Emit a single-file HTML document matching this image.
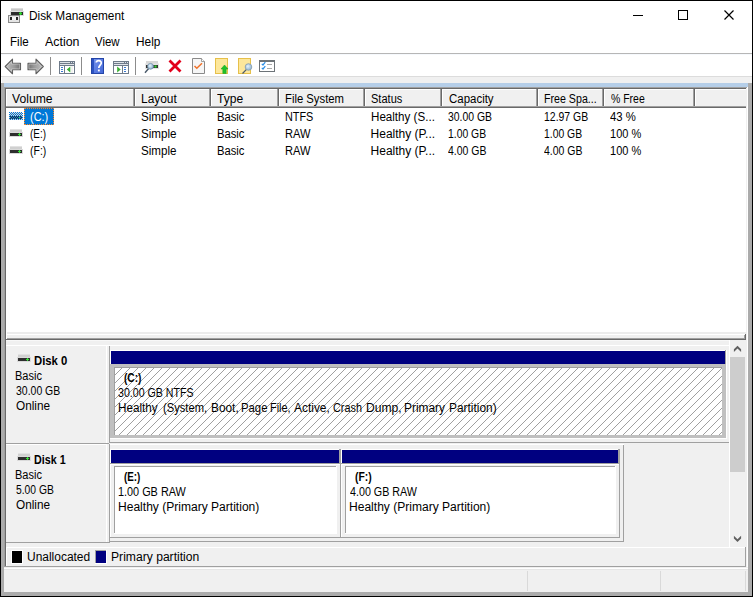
<!DOCTYPE html>
<html><head><meta charset="utf-8">
<style>
*{margin:0;padding:0;box-sizing:border-box}
html,body{width:753px;height:597px;overflow:hidden;background:#fff}
body{position:relative;font-family:"Liberation Sans",sans-serif;font-size:12px;line-height:15px;color:#000}
.a{position:absolute}
.t{position:absolute;white-space:nowrap;font-size:12px;line-height:15px}
.b{font-weight:bold}
svg{position:absolute;overflow:visible}
</style></head><body>
<div class="a" style="left:0px;top:0px;width:753px;height:1px;background:#000;"></div>
<div class="a" style="left:0px;top:596px;width:753px;height:1px;background:#000;"></div>
<div class="a" style="left:0px;top:0px;width:1px;height:597px;background:#000;"></div>
<div class="a" style="left:752px;top:0px;width:1px;height:597px;background:#000;"></div>
<svg style="left:8px;top:7px" width="16" height="16" viewBox="0 0 16 16" shape-rendering="crispEdges">
  <rect x="3" y="1" width="12" height="1" fill="#dcdcdc"/>
  <rect x="3" y="2" width="12" height="2" fill="#c8c8c8"/>
  <rect x="2" y="4" width="14" height="5" fill="#dedede"/>
  <rect x="3" y="5" width="12" height="3" fill="#2c2c2c"/>
  <rect x="11" y="5" width="3" height="3" fill="#1f6f1f"/>
  <rect x="12" y="5" width="1" height="3" fill="#30d030"/><rect x="11" y="6" width="3" height="1" fill="#30d030"/>
  <rect x="0" y="8" width="12" height="8" fill="#8a8a8a"/>
  <rect x="1" y="9" width="10" height="6" fill="#e4e4e4"/>
  <rect x="4" y="10" width="4" height="3" fill="#f4f4f4"/>
  <rect x="2" y="10" width="2" height="3" fill="#262626"/>
  <rect x="8" y="10" width="2" height="3" fill="#262626"/>
</svg>
<div class="a" style="left:633px;top:15px;width:10px;height:1px;background:#000;"></div>
<div class="a" style="left:678px;top:10px;width:10px;height:10px;border:1px solid #000"></div>
<svg style="left:724px;top:10px" width="10" height="10" viewBox="0 0 10 10"><path d="M0.5 0.5L9.5 9.5M9.5 0.5L0.5 9.5" stroke="#000" stroke-width="1.2"/></svg>
<div class="a" style="left:1px;top:53px;width:751px;height:1px;background:#b6b6b6;"></div>
<div class="a" style="left:1px;top:54px;width:751px;height:1px;background:#f6f9fd;"></div>
<div class="a" style="left:1px;top:76px;width:751px;height:1px;background:#dcdcdc;"></div>
<div class="a" style="left:1px;top:77px;width:751px;height:6px;background:#f0f0f0;"></div>
<div class="a" style="left:1px;top:77px;width:1px;height:6px;background:#fff;"></div>
<div class="a" style="left:50px;top:57px;width:1px;height:18px;background:#8c8c8c;"></div>
<div class="a" style="left:81px;top:57px;width:1px;height:18px;background:#8c8c8c;"></div>
<div class="a" style="left:135px;top:57px;width:1px;height:18px;background:#8c8c8c;"></div>
<div class="a" style="left:1px;top:83px;width:751px;height:513px;background:#ababab;"></div>
<div class="a" style="left:4px;top:83px;width:744px;height:4px;background:#b5cee8;"></div>
<div class="a" style="left:4px;top:87px;width:744px;height:505px;background:#f0f0f0;"></div>
<div class="a" style="left:4px;top:87px;width:743px;height:1px;background:#a0a0a0;"></div>
<div class="a" style="left:4px;top:87px;width:1px;height:480px;background:#a0a0a0;"></div>
<div class="a" style="left:5px;top:88px;width:741px;height:1px;background:#696969;"></div>
<div class="a" style="left:5px;top:88px;width:1px;height:479px;background:#696969;"></div>
<div class="a" style="left:747px;top:87px;width:1px;height:481px;background:#fff;"></div>
<div class="a" style="left:746px;top:88px;width:1px;height:479px;background:#f0f0f0;"></div>
<div class="a" style="left:6px;top:89px;width:740px;height:243px;background:#fff;"></div>
<div class="a" style="left:6px;top:89px;width:129px;height:19px;background:#f0f0f0;"></div>
<div class="a" style="left:6px;top:89px;width:129px;height:1px;background:#fff;"></div>
<div class="a" style="left:6px;top:89px;width:1px;height:18px;background:#fff;"></div>
<div class="a" style="left:133px;top:89px;width:1px;height:18px;background:#a0a0a0;"></div>
<div class="a" style="left:134px;top:89px;width:1px;height:19px;background:#696969;"></div>
<div class="a" style="left:6px;top:106px;width:129px;height:1px;background:#a0a0a0;"></div>
<div class="a" style="left:6px;top:107px;width:129px;height:1px;background:#696969;"></div>
<div class="a" style="left:135px;top:89px;width:76px;height:19px;background:#f0f0f0;"></div>
<div class="a" style="left:135px;top:89px;width:76px;height:1px;background:#fff;"></div>
<div class="a" style="left:135px;top:89px;width:1px;height:18px;background:#fff;"></div>
<div class="a" style="left:209px;top:89px;width:1px;height:18px;background:#a0a0a0;"></div>
<div class="a" style="left:210px;top:89px;width:1px;height:19px;background:#696969;"></div>
<div class="a" style="left:135px;top:106px;width:76px;height:1px;background:#a0a0a0;"></div>
<div class="a" style="left:135px;top:107px;width:76px;height:1px;background:#696969;"></div>
<div class="a" style="left:211px;top:89px;width:68px;height:19px;background:#f0f0f0;"></div>
<div class="a" style="left:211px;top:89px;width:68px;height:1px;background:#fff;"></div>
<div class="a" style="left:211px;top:89px;width:1px;height:18px;background:#fff;"></div>
<div class="a" style="left:277px;top:89px;width:1px;height:18px;background:#a0a0a0;"></div>
<div class="a" style="left:278px;top:89px;width:1px;height:19px;background:#696969;"></div>
<div class="a" style="left:211px;top:106px;width:68px;height:1px;background:#a0a0a0;"></div>
<div class="a" style="left:211px;top:107px;width:68px;height:1px;background:#696969;"></div>
<div class="a" style="left:279px;top:89px;width:86px;height:19px;background:#f0f0f0;"></div>
<div class="a" style="left:279px;top:89px;width:86px;height:1px;background:#fff;"></div>
<div class="a" style="left:279px;top:89px;width:1px;height:18px;background:#fff;"></div>
<div class="a" style="left:363px;top:89px;width:1px;height:18px;background:#a0a0a0;"></div>
<div class="a" style="left:364px;top:89px;width:1px;height:19px;background:#696969;"></div>
<div class="a" style="left:279px;top:106px;width:86px;height:1px;background:#a0a0a0;"></div>
<div class="a" style="left:279px;top:107px;width:86px;height:1px;background:#696969;"></div>
<div class="a" style="left:365px;top:89px;width:77px;height:19px;background:#f0f0f0;"></div>
<div class="a" style="left:365px;top:89px;width:77px;height:1px;background:#fff;"></div>
<div class="a" style="left:365px;top:89px;width:1px;height:18px;background:#fff;"></div>
<div class="a" style="left:440px;top:89px;width:1px;height:18px;background:#a0a0a0;"></div>
<div class="a" style="left:441px;top:89px;width:1px;height:19px;background:#696969;"></div>
<div class="a" style="left:365px;top:106px;width:77px;height:1px;background:#a0a0a0;"></div>
<div class="a" style="left:365px;top:107px;width:77px;height:1px;background:#696969;"></div>
<div class="a" style="left:442px;top:89px;width:96px;height:19px;background:#f0f0f0;"></div>
<div class="a" style="left:442px;top:89px;width:96px;height:1px;background:#fff;"></div>
<div class="a" style="left:442px;top:89px;width:1px;height:18px;background:#fff;"></div>
<div class="a" style="left:536px;top:89px;width:1px;height:18px;background:#a0a0a0;"></div>
<div class="a" style="left:537px;top:89px;width:1px;height:19px;background:#696969;"></div>
<div class="a" style="left:442px;top:106px;width:96px;height:1px;background:#a0a0a0;"></div>
<div class="a" style="left:442px;top:107px;width:96px;height:1px;background:#696969;"></div>
<div class="a" style="left:538px;top:89px;width:66px;height:19px;background:#f0f0f0;"></div>
<div class="a" style="left:538px;top:89px;width:66px;height:1px;background:#fff;"></div>
<div class="a" style="left:538px;top:89px;width:1px;height:18px;background:#fff;"></div>
<div class="a" style="left:602px;top:89px;width:1px;height:18px;background:#a0a0a0;"></div>
<div class="a" style="left:603px;top:89px;width:1px;height:19px;background:#696969;"></div>
<div class="a" style="left:538px;top:106px;width:66px;height:1px;background:#a0a0a0;"></div>
<div class="a" style="left:538px;top:107px;width:66px;height:1px;background:#696969;"></div>
<div class="a" style="left:604px;top:89px;width:91px;height:19px;background:#f0f0f0;"></div>
<div class="a" style="left:604px;top:89px;width:91px;height:1px;background:#fff;"></div>
<div class="a" style="left:604px;top:89px;width:1px;height:18px;background:#fff;"></div>
<div class="a" style="left:693px;top:89px;width:1px;height:18px;background:#a0a0a0;"></div>
<div class="a" style="left:694px;top:89px;width:1px;height:19px;background:#696969;"></div>
<div class="a" style="left:604px;top:106px;width:91px;height:1px;background:#a0a0a0;"></div>
<div class="a" style="left:604px;top:107px;width:91px;height:1px;background:#696969;"></div>
<div class="a" style="left:695px;top:89px;width:51px;height:19px;background:#f0f0f0;"></div>
<div class="a" style="left:695px;top:89px;width:51px;height:1px;background:#fff;"></div>
<div class="a" style="left:695px;top:89px;width:1px;height:18px;background:#fff;"></div>
<div class="a" style="left:695px;top:106px;width:51px;height:1px;background:#a0a0a0;"></div>
<div class="a" style="left:695px;top:107px;width:51px;height:1px;background:#696969;"></div>
<div class="a" style="left:24px;top:108px;width:30px;height:17px;background:#0078d7;"></div>
<div class="a" style="left:24px;top:108px;width:30px;height:17px;border:1px dotted #ff8a2a"></div>
<svg style="left:9px;top:112px" width="14" height="8" viewBox="0 0 14 8" shape-rendering="crispEdges">
  <rect x="1" y="0" width="12" height="1" fill="#e2e2e2"/>
  <rect x="1" y="1" width="12" height="3" fill="#d0d0d0"/>
  <rect x="0" y="3" width="14" height="5" fill="#dadada"/>
  <rect x="1" y="4" width="12" height="3" fill="#2e2e2e"/>
  <rect x="9" y="5" width="3" height="1" fill="#35e035"/>
  <rect x="10" y="4" width="1" height="3" fill="#35e035"/>
</svg>
<svg style="left:9px;top:112px" width="14" height="8" shape-rendering="crispEdges"><defs><pattern id="dth" width="2" height="2" patternUnits="userSpaceOnUse"><rect x="0" y="0" width="1" height="1" fill="#0078d7"/><rect x="1" y="1" width="1" height="1" fill="#0078d7"/></pattern></defs><rect width="14" height="8" fill="url(#dth)"/></svg>
<svg style="left:9px;top:129px" width="14" height="8" viewBox="0 0 14 8" shape-rendering="crispEdges">
  <rect x="1" y="0" width="12" height="1" fill="#e2e2e2"/>
  <rect x="1" y="1" width="12" height="3" fill="#d0d0d0"/>
  <rect x="0" y="3" width="14" height="5" fill="#dadada"/>
  <rect x="1" y="4" width="12" height="3" fill="#2e2e2e"/>
  <rect x="9" y="5" width="3" height="1" fill="#35e035"/>
  <rect x="10" y="4" width="1" height="3" fill="#35e035"/>
</svg>
<svg style="left:9px;top:146px" width="14" height="8" viewBox="0 0 14 8" shape-rendering="crispEdges">
  <rect x="1" y="0" width="12" height="1" fill="#e2e2e2"/>
  <rect x="1" y="1" width="12" height="3" fill="#d0d0d0"/>
  <rect x="0" y="3" width="14" height="5" fill="#dadada"/>
  <rect x="1" y="4" width="12" height="3" fill="#2e2e2e"/>
  <rect x="9" y="5" width="3" height="1" fill="#35e035"/>
  <rect x="10" y="4" width="1" height="3" fill="#35e035"/>
</svg>
<div class="a" style="left:6px;top:332px;width:740px;height:2px;background:#ececec;"></div>
<div class="a" style="left:6px;top:334px;width:740px;height:6px;background:#f0f0f0;"></div>
<div class="a" style="left:7px;top:334px;width:738px;height:1px;background:#fff;"></div>
<div class="a" style="left:7px;top:338px;width:738px;height:1px;background:#a0a0a0;"></div>
<div class="a" style="left:6px;top:332px;width:1px;height:7px;background:#fff;"></div>
<div class="a" style="left:5px;top:339px;width:741px;height:1px;background:#696969;"></div>
<div class="a" style="left:744px;top:335px;width:1px;height:4px;background:#a0a0a0;"></div>
<div class="a" style="left:745px;top:334px;width:1px;height:6px;background:#696969;"></div>
<div class="a" style="left:6px;top:340px;width:740px;height:207px;background:#f0f0f0;"></div>
<div class="a" style="left:6px;top:340px;width:723px;height:1px;background:#f8f8f8;"></div>
<div class="a" style="left:729px;top:340px;width:1px;height:207px;background:#fff;"></div>
<div class="a" style="left:730px;top:340px;width:16px;height:207px;background:#f0f0f0;"></div>
<div class="a" style="left:730px;top:357px;width:15px;height:115px;background:#cdcdcd;"></div>
<svg style="left:0;top:0" width="753" height="597"><path d="M733.9 352.1 L733.9 349.3 L737.5 345.7 L741.1 349.3 L741.1 352.1 L737.5 348.6 Z" fill="#606060"/></svg>
<svg style="left:0;top:0" width="753" height="597"><path d="M733.9 535.8 L733.9 538.6 L737.5 542.1 L741.1 538.6 L741.1 535.8 L737.5 539.3 Z" fill="#606060"/></svg>
<div class="a" style="left:6px;top:345px;width:101px;height:1px;background:#fff;"></div>
<div class="a" style="left:106px;top:345px;width:1px;height:98px;background:#fff;"></div>
<div class="a" style="left:109px;top:345px;width:1px;height:98px;background:#a0a0a0;"></div>
<svg style="left:17px;top:354px" width="14" height="8" viewBox="0 0 14 8" shape-rendering="crispEdges">
  <rect x="1" y="0" width="12" height="1" fill="#e2e2e2"/>
  <rect x="1" y="1" width="12" height="3" fill="#d0d0d0"/>
  <rect x="0" y="3" width="14" height="5" fill="#dadada"/>
  <rect x="1" y="4" width="12" height="3" fill="#2e2e2e"/>
  <rect x="9" y="5" width="3" height="1" fill="#35e035"/>
  <rect x="10" y="4" width="1" height="3" fill="#35e035"/>
</svg>
<div class="a" style="left:6px;top:444px;width:101px;height:1px;background:#fff;"></div>
<div class="a" style="left:106px;top:444px;width:1px;height:98px;background:#fff;"></div>
<div class="a" style="left:109px;top:444px;width:1px;height:98px;background:#a0a0a0;"></div>
<svg style="left:17px;top:453px" width="14" height="8" viewBox="0 0 14 8" shape-rendering="crispEdges">
  <rect x="1" y="0" width="12" height="1" fill="#e2e2e2"/>
  <rect x="1" y="1" width="12" height="3" fill="#d0d0d0"/>
  <rect x="0" y="3" width="14" height="5" fill="#dadada"/>
  <rect x="1" y="4" width="12" height="3" fill="#2e2e2e"/>
  <rect x="9" y="5" width="3" height="1" fill="#35e035"/>
  <rect x="10" y="4" width="1" height="3" fill="#35e035"/>
</svg>
<div class="a" style="left:6px;top:443px;width:103px;height:1px;background:#a0a0a0;"></div>
<div class="a" style="left:110px;top:442px;width:619px;height:1px;background:#a0a0a0;"></div>
<div class="a" style="left:110px;top:350px;width:616px;height:1px;background:#fff;"></div>
<div class="a" style="left:110px;top:350px;width:1px;height:14px;background:#fff;"></div>
<div class="a" style="left:111px;top:351px;width:614px;height:13px;background:#000080;"></div>
<div class="a" style="left:725px;top:350px;width:1px;height:88px;background:#a0a0a0;"></div>
<div class="a" style="left:110px;top:364px;width:616px;height:74px;background:#c0c0c0;"></div>
<div class="a" style="left:114px;top:367px;width:608px;height:1px;background:#a0a0a0;"></div>
<div class="a" style="left:114px;top:367px;width:1px;height:68px;background:#a0a0a0;"></div>
<svg style="left:115px;top:368px" width="607" height="67" shape-rendering="crispEdges"><defs><pattern id="hatch" width="8" height="8" patternUnits="userSpaceOnUse" x="-115" y="-368">
<rect x="1" y="0" width="1" height="1" fill="#a0a0a0"/><rect x="0" y="1" width="1" height="1" fill="#a0a0a0"/><rect x="7" y="2" width="1" height="1" fill="#a0a0a0"/><rect x="6" y="3" width="1" height="1" fill="#a0a0a0"/><rect x="5" y="4" width="1" height="1" fill="#a0a0a0"/><rect x="4" y="5" width="1" height="1" fill="#a0a0a0"/><rect x="3" y="6" width="1" height="1" fill="#a0a0a0"/><rect x="2" y="7" width="1" height="1" fill="#a0a0a0"/>
</pattern></defs><rect width="607" height="67" fill="#fff"/><rect width="607" height="67" fill="url(#hatch)"/></svg>
<div class="a" style="left:726px;top:350px;width:1px;height:89px;background:#fff;"></div>
<div class="a" style="left:6px;top:345px;width:723px;height:1px;background:#fff;"></div>
<div class="a" style="left:110px;top:438px;width:617px;height:1px;background:#fff;"></div>
<div class="a" style="left:110px;top:444px;width:514px;height:1px;background:#fff;"></div>
<div class="a" style="left:110px;top:449px;width:230px;height:1px;background:#fff;"></div>
<div class="a" style="left:110px;top:449px;width:1px;height:14px;background:#fff;"></div>
<div class="a" style="left:111px;top:450px;width:228px;height:13px;background:#000080;"></div>
<div class="a" style="left:339px;top:449px;width:1px;height:14px;background:#a0a0a0;"></div>
<div class="a" style="left:109px;top:463px;width:232px;height:1px;background:#a0a0a0;"></div>
<div class="a" style="left:109px;top:463px;width:1px;height:75px;background:#a0a0a0;"></div>
<div class="a" style="left:340px;top:449px;width:1px;height:89px;background:#a0a0a0;"></div>
<div class="a" style="left:109px;top:537px;width:232px;height:1px;background:#a0a0a0;"></div>
<div class="a" style="left:110px;top:464px;width:230px;height:73px;background:#f0f0f0;"></div>
<div class="a" style="left:110px;top:464px;width:230px;height:1px;background:#fff;"></div>
<div class="a" style="left:110px;top:464px;width:1px;height:73px;background:#fff;"></div>
<div class="a" style="left:114px;top:466px;width:223px;height:68px;background:#fff;"></div>
<div class="a" style="left:114px;top:466px;width:222px;height:1px;background:#a0a0a0;"></div>
<div class="a" style="left:114px;top:466px;width:1px;height:67px;background:#a0a0a0;"></div>
<div class="a" style="left:341px;top:449px;width:278px;height:1px;background:#fff;"></div>
<div class="a" style="left:341px;top:449px;width:1px;height:14px;background:#fff;"></div>
<div class="a" style="left:342px;top:450px;width:276px;height:13px;background:#000080;"></div>
<div class="a" style="left:618px;top:449px;width:1px;height:14px;background:#a0a0a0;"></div>
<div class="a" style="left:340px;top:463px;width:280px;height:1px;background:#a0a0a0;"></div>
<div class="a" style="left:340px;top:463px;width:1px;height:75px;background:#a0a0a0;"></div>
<div class="a" style="left:619px;top:449px;width:1px;height:89px;background:#a0a0a0;"></div>
<div class="a" style="left:340px;top:537px;width:280px;height:1px;background:#a0a0a0;"></div>
<div class="a" style="left:341px;top:464px;width:278px;height:73px;background:#f0f0f0;"></div>
<div class="a" style="left:341px;top:464px;width:278px;height:1px;background:#fff;"></div>
<div class="a" style="left:341px;top:464px;width:1px;height:73px;background:#fff;"></div>
<div class="a" style="left:345px;top:466px;width:271px;height:68px;background:#fff;"></div>
<div class="a" style="left:345px;top:466px;width:270px;height:1px;background:#a0a0a0;"></div>
<div class="a" style="left:345px;top:466px;width:1px;height:67px;background:#a0a0a0;"></div>
<div class="a" style="left:623px;top:445px;width:1px;height:97px;background:#a0a0a0;"></div>
<div class="a" style="left:6px;top:542px;width:104px;height:1px;background:#a0a0a0;"></div>
<div class="a" style="left:109px;top:541px;width:515px;height:1px;background:#a0a0a0;"></div>
<div class="a" style="left:6px;top:547px;width:740px;height:1px;background:#fff;"></div>
<div class="a" style="left:6px;top:547px;width:1px;height:20px;background:#fff;"></div>
<div class="a" style="left:745px;top:547px;width:1px;height:20px;background:#a0a0a0;"></div>
<div class="a" style="left:5px;top:566px;width:741px;height:1px;background:#a0a0a0;"></div>
<div class="a" style="left:11px;top:550px;width:12px;height:14px;background:#fff;"></div>
<div class="a" style="left:12px;top:551px;width:10px;height:12px;background:#000;"></div>
<div class="a" style="left:95px;top:550px;width:12px;height:14px;background:#fff;"></div>
<div class="a" style="left:95px;top:550px;width:11px;height:1px;background:#a0a0a0;"></div>
<div class="a" style="left:95px;top:550px;width:1px;height:13px;background:#a0a0a0;"></div>
<div class="a" style="left:96px;top:551px;width:10px;height:12px;background:#000080;"></div>
<div class="a" style="left:4px;top:567px;width:744px;height:25px;background:#f0f0f0;"></div>
<div class="a" style="left:4px;top:568px;width:744px;height:1px;background:#fff;"></div>
<div class="a" style="left:4px;top:569px;width:744px;height:1px;background:#e6e6e6;"></div>
<div class="a" style="left:527px;top:571px;width:1px;height:20px;background:#d9d9d9;"></div>
<div class="a" style="left:660px;top:571px;width:1px;height:20px;background:#d9d9d9;"></div>
<div class="a" style="left:745px;top:571px;width:1px;height:20px;background:#d9d9d9;"></div>
<div class="t" style="left:28.61px;top:9px;color:#000;transform:scaleX(0.9854);transform-origin:0 0;">Disk Management</div>
<div class="t" style="left:9.73px;top:35px;color:#000;transform:scaleX(0.9667);transform-origin:0 0;">File</div>
<div class="t" style="left:44.50px;top:35px;color:#000;transform:scaleX(1.0333);transform-origin:0 0;">Action</div>
<div class="t" style="left:94.80px;top:35px;color:#000;transform:scaleX(0.9538);transform-origin:0 0;">View</div>
<div class="t" style="left:135.61px;top:35px;color:#000;transform:scaleX(0.9875);transform-origin:0 0;">Help</div>
<div class="t" style="left:12.20px;top:92px;color:#000;transform:scaleX(1.0125);transform-origin:0 0;">Volume</div>
<div class="t" style="left:140.61px;top:92px;color:#000;transform:scaleX(0.9943);transform-origin:0 0;">Layout</div>
<div class="t" style="left:216.80px;top:92px;color:#000;transform:scaleX(1.0038);transform-origin:0 0;">Type</div>
<div class="t" style="left:284.96px;top:92px;color:#000;transform:scaleX(0.9410);transform-origin:0 0;">File System</div>
<div class="t" style="left:371.40px;top:92px;color:#000;transform:scaleX(0.9206);transform-origin:0 0;">Status</div>
<div class="t" style="left:448.60px;top:92px;color:#000;transform:scaleX(0.9553);transform-origin:0 0;">Capacity</div>
<div class="t" style="left:544.01px;top:92px;color:#000;transform:scaleX(0.8879);transform-origin:0 0;">Free Spa...</div>
<div class="t" style="left:610.90px;top:92px;color:#000;transform:scaleX(0.8718);transform-origin:0 0;">% Free</div>
<div class="t" style="left:29.50px;top:110px;color:#fff;transform:scaleX(0.9100);transform-origin:0 0;">(C:)</div>
<div class="t" style="left:141.30px;top:110px;color:#000;transform:scaleX(0.9676);transform-origin:0 0;">Simple</div>
<div class="t" style="left:216.66px;top:110px;color:#000;transform:scaleX(0.9357);transform-origin:0 0;">Basic</div>
<div class="t" style="left:284.80px;top:110px;color:#000;transform:scaleX(0.9033);transform-origin:0 0;">NTFS</div>
<div class="t" style="left:370.63px;top:110px;color:#000;transform:scaleX(0.9672);transform-origin:0 0;">Healthy (S...</div>
<div class="t" style="left:448.20px;top:110px;color:#000;transform:scaleX(0.8686);transform-origin:0 0;">30.00 GB</div>
<div class="t" style="left:544.03px;top:110px;color:#000;transform:scaleX(0.8720);transform-origin:0 0;">12.97 GB</div>
<div class="t" style="left:609.80px;top:110px;color:#000;transform:scaleX(0.9444);transform-origin:0 0;">43 %</div>
<div class="t" style="left:29.50px;top:127px;color:#000;transform:scaleX(0.8263);transform-origin:0 0;">(E:)</div>
<div class="t" style="left:141.30px;top:127px;color:#000;transform:scaleX(0.9676);transform-origin:0 0;">Simple</div>
<div class="t" style="left:216.66px;top:127px;color:#000;transform:scaleX(0.9357);transform-origin:0 0;">Basic</div>
<div class="t" style="left:284.77px;top:127px;color:#000;transform:scaleX(0.9259);transform-origin:0 0;">RAW</div>
<div class="t" style="left:370.60px;top:127px;color:#000;">Healthy (P...</div>
<div class="t" style="left:448.03px;top:127px;color:#000;transform:scaleX(0.8651);transform-origin:0 0;">1.00 GB</div>
<div class="t" style="left:544.03px;top:127px;color:#000;transform:scaleX(0.8651);transform-origin:0 0;">1.00 GB</div>
<div class="t" style="left:609.98px;top:127px;color:#000;transform:scaleX(0.9182);transform-origin:0 0;">100 %</div>
<div class="t" style="left:29.50px;top:144px;color:#000;transform:scaleX(0.8722);transform-origin:0 0;">(F:)</div>
<div class="t" style="left:141.30px;top:144px;color:#000;transform:scaleX(0.9676);transform-origin:0 0;">Simple</div>
<div class="t" style="left:216.66px;top:144px;color:#000;transform:scaleX(0.9357);transform-origin:0 0;">Basic</div>
<div class="t" style="left:284.77px;top:144px;color:#000;transform:scaleX(0.9259);transform-origin:0 0;">RAW</div>
<div class="t" style="left:370.60px;top:144px;color:#000;">Healthy (P...</div>
<div class="t" style="left:447.80px;top:144px;color:#000;transform:scaleX(0.8727);transform-origin:0 0;">4.00 GB</div>
<div class="t" style="left:543.80px;top:144px;color:#000;transform:scaleX(0.8727);transform-origin:0 0;">4.00 GB</div>
<div class="t" style="left:609.98px;top:144px;color:#000;transform:scaleX(0.9182);transform-origin:0 0;">100 %</div>
<div class="t b" style="left:33.80px;top:354px;color:#000;transform:scaleX(0.9429);transform-origin:0 0;">Disk 0</div>
<div class="t" style="left:14.68px;top:369px;color:#000;transform:scaleX(0.9179);transform-origin:0 0;">Basic</div>
<div class="t" style="left:15.60px;top:384px;color:#000;transform:scaleX(0.8725);transform-origin:0 0;">30.00 GB</div>
<div class="t" style="left:15.60px;top:399px;color:#000;transform:scaleX(0.9829);transform-origin:0 0;">Online</div>
<div class="t b" style="left:33.80px;top:453px;color:#000;transform:scaleX(0.8944);transform-origin:0 0;">Disk 1</div>
<div class="t" style="left:14.68px;top:468px;color:#000;transform:scaleX(0.9179);transform-origin:0 0;">Basic</div>
<div class="t" style="left:15.60px;top:483px;color:#000;transform:scaleX(0.8591);transform-origin:0 0;">5.00 GB</div>
<div class="t" style="left:15.60px;top:498px;color:#000;transform:scaleX(0.9829);transform-origin:0 0;">Online</div>
<div class="t b" style="left:124.30px;top:371px;color:#000;transform:scaleX(0.8429);transform-origin:0 0;">(C:)</div>
<div class="t" style="left:118.40px;top:386px;color:#000;transform:scaleX(0.8859);transform-origin:0 0;">30.00 GB NTFS</div>
<div class="t" style="left:117.83px;top:401px;color:#000;transform:scaleX(0.9750);transform-origin:0 0;">Healthy</div>
<div class="t" style="left:162.60px;top:401px;color:#000;transform:scaleX(0.9319);transform-origin:0 0;">(System,</div>
<div class="t" style="left:211.01px;top:401px;color:#000;transform:scaleX(0.9885);transform-origin:0 0;">Boot,</div>
<div class="t" style="left:240.76px;top:401px;color:#000;transform:scaleX(0.9444);transform-origin:0 0;">Page</div>
<div class="t" style="left:270.29px;top:401px;color:#000;transform:scaleX(0.9095);transform-origin:0 0;">File,</div>
<div class="t" style="left:293.80px;top:401px;color:#000;transform:scaleX(0.9943);transform-origin:0 0;">Active,</div>
<div class="t" style="left:333.40px;top:401px;color:#000;transform:scaleX(0.9031);transform-origin:0 0;">Crash</div>
<div class="t" style="left:366.09px;top:401px;color:#000;transform:scaleX(1.0088);transform-origin:0 0;">Dump,</div>
<div class="t" style="left:404.31px;top:401px;color:#000;transform:scaleX(0.9927);transform-origin:0 0;">Primary</div>
<div class="t" style="left:448.91px;top:401px;color:#000;transform:scaleX(0.9915);transform-origin:0 0;">Partition)</div>
<div class="t b" style="left:124.40px;top:470px;color:#000;transform:scaleX(0.8200);transform-origin:0 0;">(E:)</div>
<div class="t" style="left:117.59px;top:485px;color:#000;transform:scaleX(0.9054);transform-origin:0 0;">1.00 GB RAW</div>
<div class="t" style="left:117.50px;top:500px;color:#000;transform:scaleX(1.0043);transform-origin:0 0;">Healthy (Primary Partition)</div>
<div class="t b" style="left:355.40px;top:470px;color:#000;transform:scaleX(0.8632);transform-origin:0 0;">(F:)</div>
<div class="t" style="left:349.50px;top:485px;color:#000;transform:scaleX(0.8933);transform-origin:0 0;">4.00 GB RAW</div>
<div class="t" style="left:348.50px;top:500px;color:#000;transform:scaleX(1.0043);transform-origin:0 0;">Healthy (Primary Partition)</div>
<div class="t" style="left:26.50px;top:550px;color:#000;transform:scaleX(0.9968);transform-origin:0 0;">Unallocated</div>
<div class="t" style="left:110.99px;top:550px;color:#000;transform:scaleX(1.0105);transform-origin:0 0;">Primary partition</div>
<svg style="left:0;top:0" width="300" height="80" viewBox="0 0 300 80">
<defs>
<linearGradient id="ag" x1="0" y1="0" x2="1" y2="0"><stop offset="0" stop-color="#c4c4c4"/><stop offset="0.6" stop-color="#9a9a9a"/><stop offset="1" stop-color="#707070"/></linearGradient><linearGradient id="ag2" x1="1" y1="0" x2="0" y2="0"><stop offset="0" stop-color="#c4c4c4"/><stop offset="0.6" stop-color="#9a9a9a"/><stop offset="1" stop-color="#707070"/></linearGradient>
<linearGradient id="hg" x1="0" y1="0" x2="1" y2="1"><stop offset="0" stop-color="#7a98ee"/><stop offset="1" stop-color="#3f64d6"/></linearGradient>
<radialGradient id="lens" cx="0.4" cy="0.4" r="0.6"><stop offset="0" stop-color="#e6f2fa"/><stop offset="1" stop-color="#8fb4d2"/></radialGradient>
</defs>
<!-- back arrow -->
<path d="M5.2 66.5 L12.5 59.2 L12.5 63.2 L20.5 63.2 L20.5 69.8 L12.5 69.8 L12.5 73.8 Z" fill="url(#ag)" stroke="#5e5e5e" stroke-width="1.1" stroke-linejoin="round"/>
<path d="M6.8 66.5 L11.6 61.7 L11.6 64.1 L19.6 64.1 L19.6 68.9 L11.6 68.9 L11.6 71.3 Z" stroke="#d8d8d8" stroke-width="0.7" fill="none" stroke-opacity="0.8"/>
<!-- forward arrow -->
<path d="M43.3 66.5 L36 59.2 L36 63.2 L28 63.2 L28 69.8 L36 69.8 L36 73.8 Z" fill="url(#ag2)" stroke="#5e5e5e" stroke-width="1.1" stroke-linejoin="round"/>
<path d="M41.7 66.5 L36.9 61.7 L36.9 64.1 L28.9 64.1 L28.9 68.9 L36.9 68.9 L36.9 71.3 Z" stroke="#d8d8d8" stroke-width="0.7" fill="none" stroke-opacity="0.8"/>
<!-- console tree icon -->
<g shape-rendering="crispEdges">
<rect x="59" y="61" width="16" height="13" fill="#6f7b8a"/>
<rect x="60" y="62" width="10" height="1" fill="#dfe3e8"/>
<rect x="71" y="62" width="1" height="1" fill="#dfe3e8"/><rect x="73" y="62" width="1" height="1" fill="#dfe3e8"/>
<rect x="60" y="64" width="14" height="1" fill="#dfe3e8"/>
<rect x="60" y="66" width="4" height="7" fill="#fff"/>
<rect x="65" y="66" width="9" height="7" fill="#fff"/>
<rect x="71" y="66" width="2" height="7" fill="#f2f2f2"/>
<rect x="61" y="67" width="2" height="1" fill="#3d7bd1"/><rect x="61" y="69" width="2" height="1" fill="#3d7bd1"/><rect x="61" y="71" width="2" height="1" fill="#3d7bd1"/>
</g>
<path d="M66.8 69.5 L70.3 66.6 L70.3 72.4 Z" fill="#36b030"/>
<!-- help -->
<rect x="91" y="58" width="13" height="16" fill="url(#hg)"/>
<rect x="91.5" y="58.5" width="12" height="15" fill="none" stroke="#2445a8" stroke-width="1"/>
<rect x="92" y="59" width="2" height="14" fill="#2b52c2"/>
<path d="M96.3 62.5 C96.5 60 101.5 60 101.3 63 C101.2 65 98.8 65.5 98.8 68" fill="none" stroke="#fff" stroke-width="1.7"/>
<rect x="97.9" y="69.5" width="1.9" height="1.9" fill="#fff"/>
<!-- action pane icon -->
<g shape-rendering="crispEdges">
<rect x="113" y="61" width="16" height="13" fill="#6f7b8a"/>
<rect x="114" y="62" width="10" height="1" fill="#dfe3e8"/>
<rect x="125" y="62" width="1" height="1" fill="#dfe3e8"/><rect x="127" y="62" width="1" height="1" fill="#dfe3e8"/>
<rect x="114" y="64" width="14" height="1" fill="#dfe3e8"/>
<rect x="114" y="66" width="8" height="7" fill="#fff"/>
<rect x="123" y="66" width="5" height="7" fill="#fff"/>
<rect x="124" y="67" width="2" height="1" fill="#3d7bd1"/><rect x="124" y="69" width="2" height="1" fill="#3d7bd1"/><rect x="124" y="71" width="2" height="1" fill="#3d7bd1"/>
</g>
<path d="M117.2 66.6 L120.7 69.5 L117.2 72.4 Z" fill="#36b030"/>
<!-- drive with magnifier -->
<rect x="146" y="61" width="12" height="3" fill="#d8d8d8"/>
<rect x="145" y="63.5" width="14" height="5.5" fill="#e4e4e4"/>
<rect x="146" y="65" width="12" height="3" fill="#333"/>
<rect x="154.5" y="65.5" width="2" height="2" fill="#2ee22e"/>
<line x1="145" y1="72.8" x2="148.6" y2="68.5" stroke="#4a5a6a" stroke-width="1.4"/>
<circle cx="150.5" cy="66.3" r="2.9" fill="url(#lens)" stroke="#7090a8" stroke-width="0.8"/>
<!-- red X -->
<path d="M169.5 60.5 L180.5 71.5 M180.5 60.5 L169.5 71.5" stroke="#e2001a" stroke-width="2.8"/>
<!-- doc with check -->
<path d="M192.5 58.5 L201.5 58.5 L204.5 61.5 L204.5 73.5 L192.5 73.5 Z" fill="#f6f6f6" stroke="#8a8a8a" stroke-width="1"/>
<path d="M201.5 58.5 L201.5 61.5 L204.5 61.5" fill="#fff" stroke="#8a8a8a" stroke-width="0.8"/>
<path d="M194.5 66 L196.8 68.3 L202 63.3" fill="none" stroke="#f0722a" stroke-width="1.5"/>
<!-- folder up -->
<rect x="215.5" y="58.5" width="12" height="15" fill="#fde79b" stroke="#e6c04a" stroke-width="1"/>
<path d="M221 69 L224.5 65 L228 69 L226.2 69 L226.2 73.5 L222.8 73.5 L222.8 69 Z" fill="#1fc12a" stroke="#12a01c" stroke-width="0.5"/>
<!-- folder search -->
<rect x="238.5" y="58.5" width="12" height="15" fill="#fde79b" stroke="#e6c04a" stroke-width="1"/>
<line x1="242.5" y1="73.5" x2="246.5" y2="69.3" stroke="#4a5a6a" stroke-width="1.2"/>
<circle cx="248.5" cy="67" r="3.3" fill="url(#lens)" stroke="#8aa0b0" stroke-width="0.9"/>
<!-- checklist -->
<g shape-rendering="crispEdges">
<rect x="259" y="60" width="16" height="12" fill="#6d7378"/>
<rect x="260" y="62" width="14" height="9" fill="#fff"/>
<rect x="267" y="64" width="5" height="1" fill="#a9a9a9"/>
<rect x="267" y="68" width="5" height="1" fill="#a9a9a9"/>
</g>
<path d="M261.8 63.8 L263 65 L265.3 62.2 M261.8 67.8 L263 69 L265.3 66.2" fill="none" stroke="#2d8fe6" stroke-width="1.2"/>
</svg>

</body></html>
